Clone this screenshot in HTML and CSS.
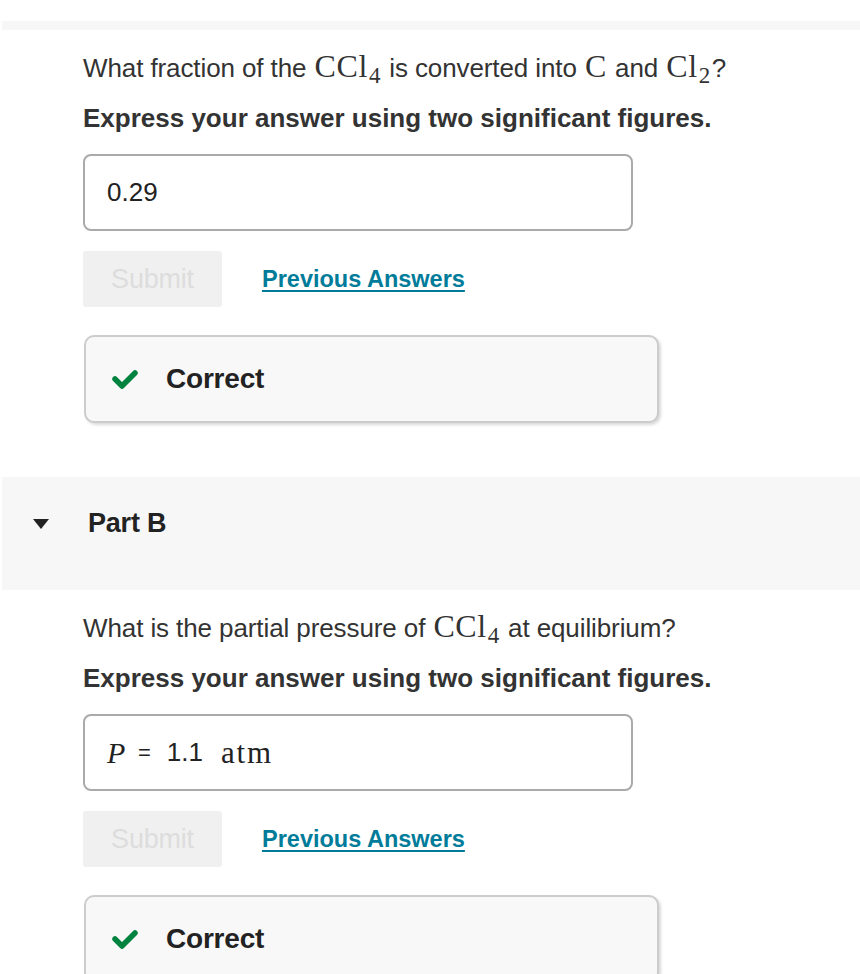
FILE: index.html
```html
<!DOCTYPE html>
<html>
  <head>
    <title>Parts</title>
    <link rel="stylesheet" href="styles.css">
  </head>
  <body>
    <div class="page">
      <div class="top-strip"></div>

      <!-- Part A body -->
      <div class="part-body">
        <p class="question">What fraction of the <span class="math">CCl<sub>4</sub></span> is converted into <span class="math">C</span> and <span class="math">Cl<sub>2</sub></span>?</p>
        <p class="instruction">Express your answer using two significant figures.</p>
        <div class="answer-box">0.29</div>
        <div class="actions">
          <button class="submit" disabled>Submit</button>
          <a class="prev-link" href="#">Previous Answers</a>
        </div>
        <div class="feedback">
          <svg class="check" width="28" height="24" viewBox="0 0 28 24">
            <polyline points="4,12 11,19 24,6" fill="none" stroke="#00833e" stroke-width="5.5" stroke-linecap="round" stroke-linejoin="round" />
          </svg>
          <span class="feedback-text">Correct</span>
        </div>
      </div>

      <!-- Part B header -->
      <div class="part-header">
        <span class="caret"></span>
        <span class="part-title">Part B</span>
      </div>

      <!-- Part B body -->
      <div class="part-body">
        <p class="question">What is the partial pressure of <span class="math">CCl<sub>4</sub></span> at equilibrium?</p>
        <p class="instruction">Express your answer using two significant figures.</p>
        <div class="answer-box"><span class="math var">P</span><span class="eq">=</span>1.1<span class="math unit">atm</span></div>
        <div class="actions">
          <button class="submit" disabled>Submit</button>
          <a class="prev-link" href="#">Previous Answers</a>
        </div>
        <div class="feedback">
          <svg class="check" width="28" height="24" viewBox="0 0 28 24">
            <polyline points="4,12 11,19 24,6" fill="none" stroke="#00833e" stroke-width="5.5" stroke-linecap="round" stroke-linejoin="round" />
          </svg>
          <span class="feedback-text">Correct</span>
        </div>
      </div>
    </div>
  </body>
</html>
```

FILE: styles.css
```css
/* Page */
body {
  margin: 0;
  background-color: #ffffff;
  font-family: "Liberation Sans", Arial, sans-serif;
  color: #333333;
}

.page {
  padding-top: 21px;
}

.top-strip {
  height: 9px;
  margin-left: 2px;
  background-color: #f7f7f7;
}

/* Part content */
.part-body {
  padding: 21px 0 0 83px;
}

.question {
  margin: 0;
  font-size: 26px;
  line-height: 30px;
  letter-spacing: -0.1px;
}

.math {
  display: inline-block;
  margin: 0 1px;
  font-family: "Liberation Serif", "Times New Roman", serif;
  font-size: 32px;
  line-height: 30px;
  letter-spacing: 0.6px;
}

.math sub {
  font-size: 23px;
  vertical-align: -6px;
  line-height: 0;
  margin-left: 1px;
}

.instruction {
  margin: 20px 0 0 0;
  font-size: 26px;
  line-height: 30px;
  font-weight: bold;
}

/* Answer input */
.answer-box {
  box-sizing: border-box;
  width: 550px;
  height: 77px;
  margin-top: 21px;
  padding: 0 22px;
  border: 2px solid #aaaaaa;
  border-radius: 8px;
  display: flex;
  align-items: center;
  font-size: 26px;
  color: #222222;
}

.answer-box .var {
  margin: 0 12px 0 0;
  font-style: italic;
  font-size: 30px;
}

.answer-box .eq {
  margin-right: 16px;
  font-size: 22px;
}

.answer-box .unit {
  margin: 0 0 0 18px;
  font-size: 31px;
  letter-spacing: 1.8px;
}

/* Submit row */
.actions {
  display: flex;
  align-items: center;
  margin-top: 20px;
}

.submit {
  width: 139px;
  height: 56px;
  border: none;
  border-radius: 3px;
  background-color: #f0f0f0;
  color: #dddddd;
  font-family: "Liberation Sans", Arial, sans-serif;
  font-size: 27px;
  letter-spacing: -0.2px;
}

.prev-link {
  margin-left: 40px;
  color: #007c9a;
  font-size: 23.5px;
  font-weight: bold;
  text-decoration: underline;
  text-decoration-thickness: 2px;
  text-underline-offset: 3px;
}

/* Feedback box */
.feedback {
  box-sizing: border-box;
  width: 575px;
  height: 88px;
  margin-top: 28px;
  margin-left: 1px;
  padding-left: 25px;
  border: 2px solid #cccccc;
  border-radius: 10px;
  background-color: #f8f8f8;
  box-shadow: 2px 2px 3px rgba(0, 0, 0, 0.15);
  display: flex;
  align-items: center;
}

.check {
  margin-right: 27px;
}

.feedback-text {
  font-size: 28px;
  font-weight: bold;
  color: #222222;
  letter-spacing: -0.2px;
}

/* Part B header */
.part-header {
  box-sizing: border-box;
  margin: 54px 0 0 2px;
  height: 113px;
  padding-top: 30px;
  background-color: #f7f7f7;
  display: flex;
  align-items: flex-start;
}

.caret {
  width: 0;
  height: 0;
  margin: 12px 0 0 31px;
  border-left: 8px solid transparent;
  border-right: 8px solid transparent;
  border-top: 10px solid #222222;
}

.part-title {
  margin-left: 39px;
  font-size: 27px;
  line-height: 32px;
  font-weight: bold;
  color: #222222;
  letter-spacing: -0.2px;
}
```
